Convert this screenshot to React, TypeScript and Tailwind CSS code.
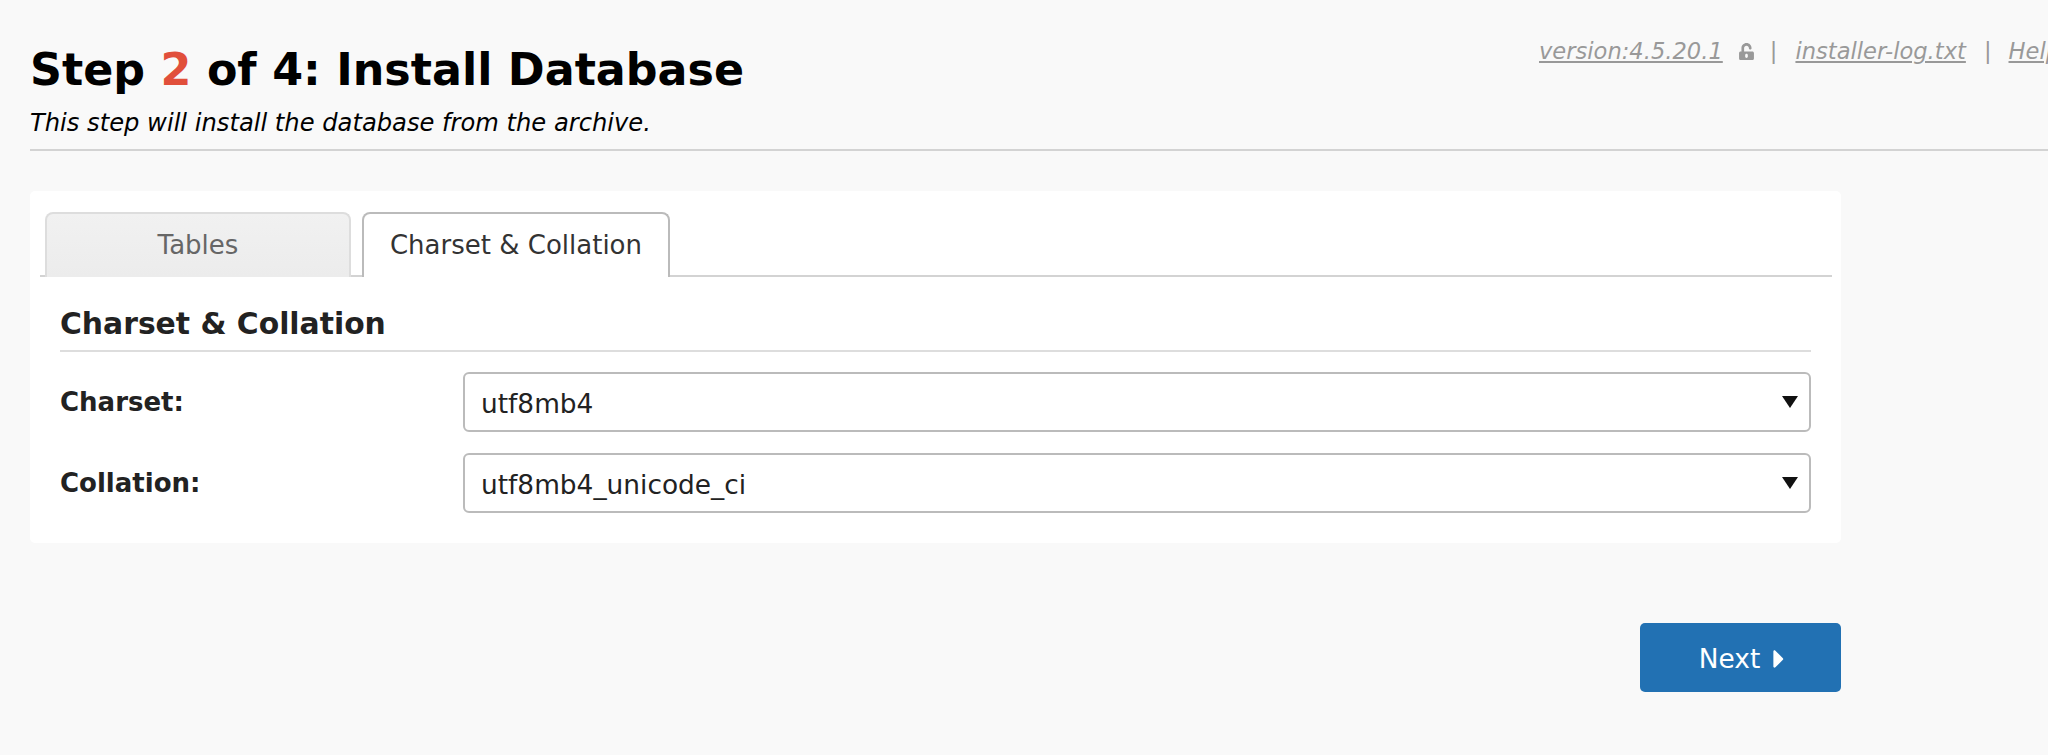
import { FaCaretRight, FaUnlockAlt } from "react-icons/fa";

function SelectRow({ label, value }: { label: string; value: string }) {
  return (
    <div className="flex items-center h-[60px]">
      <label className="w-[403px] shrink-0 text-[26px] leading-[32px] font-bold text-[#222]">{label}</label>
      <div className="relative flex-1 h-[60px]">
        <select
          defaultValue={value}
          className="w-full h-full appearance-none bg-white border-2 border-[#bbbbbb] rounded-[6px] pl-[16px] pt-[3px] text-[26.4px] text-[#222] outline-none"
        >
          <option value={value}>{value}</option>
        </select>
        <svg className="absolute right-[13px] top-[24px] pointer-events-none" width="16" height="12" viewBox="0 0 16 12" aria-hidden="true">
          <path d="M0 0h16L8 12z" fill="#111" />
        </svg>
      </div>
    </div>
  );
}

export default function App() {
  return (
    <div className="w-[2048px] h-[755px] overflow-hidden bg-[#f9f9f9] font-['DejaVu_Sans',sans-serif]">
      <header className="ml-[30px] h-[151px] border-b-2 border-[#d3d3d3] flex justify-between">
        <div className="pt-[43px]">
          <h1 className="text-[44.4px] leading-[54px] font-bold text-black whitespace-nowrap">
            Step <span className="text-[#e14f3b]">2</span> of 4: Install Database
          </h1>
          <p className="mt-[12px] text-[24.2px] leading-[28px] italic text-black whitespace-nowrap">
            This step will install the database from the archive.
          </p>
        </div>
        <div className="w-[509px] shrink-0 overflow-hidden pt-[36px]">
          <div className="flex items-center text-[22.6px] leading-[30px] italic text-[#999] whitespace-nowrap">
            <a href="#" className="underline">version:4.5.20.1</a>
            <FaUnlockAlt className="shrink-0 ml-[15px] text-[17px] text-[#999]" />
            <span className="ml-[15px] not-italic">|</span>
            <a href="#" className="ml-[18px] underline">installer-log.txt</a>
            <span className="ml-[18px] not-italic">|</span>
            <a href="#" className="ml-[17px] underline">Help</a>
          </div>
        </div>
      </header>

      <main className="ml-[30px] w-[1811px]">
        <section className="mt-[40px] h-[352px] bg-white rounded-[5px] pt-[21px] px-[10px]">
          <div className="flex items-end h-[65px] border-b-2 border-[#d3d3d3] w-[1792px] pl-[5px]">
            <button className="w-[306px] h-[65px] -mb-[2px] border-2 border-b-0 border-[#dddddd] rounded-t-[8px] bg-gradient-to-b from-[#f1f1f1] to-[#ececec] text-[26px] text-[#666]">
              Tables
            </button>
            <button className="ml-[11px] w-[308px] h-[65px] -mb-[2px] border-2 border-b-0 border-[#bbbbbb] rounded-t-[8px] bg-white text-[26px] text-[#333]">
              Charset &amp; Collation
            </button>
          </div>
          <div className="px-[20px] w-[1791px]">
            <h2 className="h-[75px] pt-[29px] border-b-2 border-[#dddddd] text-[29.8px] leading-[36px] font-bold text-[#222]">
              Charset &amp; Collation
            </h2>
            <div className="mt-[20px] flex flex-col gap-[21px]">
              <SelectRow label="Charset:" value="utf8mb4" />
              <SelectRow label="Collation:" value="utf8mb4_unicode_ci" />
            </div>
          </div>
        </section>
        <div className="mt-[80px] flex justify-end">
          <button className="w-[201px] h-[69px] bg-[#2271b3] rounded-[5px] pl-[12px] pt-[2px] text-white text-[26.4px] flex items-center justify-center gap-[4px]">
            Next <FaCaretRight className="text-[30px]" />
          </button>
        </div>
      </main>
    </div>
  );
}
